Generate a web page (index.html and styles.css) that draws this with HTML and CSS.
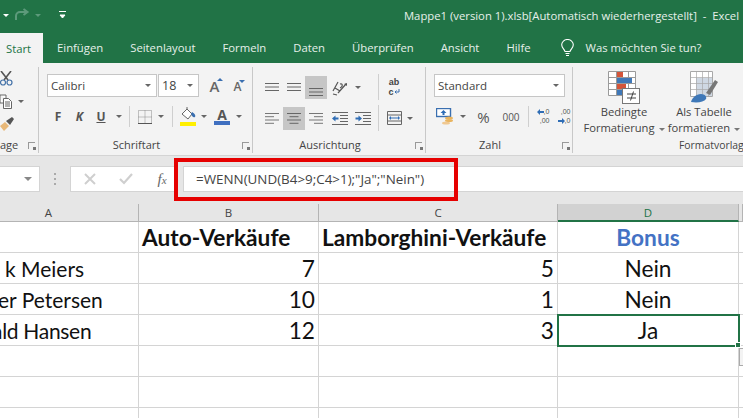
FILE: index.html
```html
<!DOCTYPE html>
<html lang="de">
<head>
<meta charset="utf-8">
<title>Mappe1 - Excel</title>
<link rel="stylesheet" href="styles.css">
</head>
<body>
<div class="app">
  <header class="titlebar">
    <div class="qat">
      <i class="caret caret-white"></i>
      <svg class="redo" width="16" height="14" viewBox="0 0 16 14"><path d="M2 12V8a4 4 0 0 1 4-4h7M9.500 1l4 3-4 3" fill="none" stroke="#5d9a7b" stroke-width="2"/></svg>
      <i class="caret caret-dim"></i>
      <svg class="custom" width="7" height="8" viewBox="0 0 7 8"><path d="M0 .5h7M1 4h5l-2.500 3z" fill="#fff" stroke="#fff" stroke-width="1"/></svg>
    </div>
    <div class="doc-title">Mappe1 (version 1).xlsb[Automatisch wiederhergestellt]&nbsp; - &nbsp;Excel</div>
  </header>

  <nav class="tabs">
    <span class="tab tab-active">Start</span>
    <span class="tab">Einfügen</span>
    <span class="tab">Seitenlayout</span>
    <span class="tab">Formeln</span>
    <span class="tab">Daten</span>
    <span class="tab">Überprüfen</span>
    <span class="tab">Ansicht</span>
    <span class="tab">Hilfe</span>
    <span class="tell">
      <svg width="13" height="18" viewBox="0 0 13 18"><path d="M4 12.500C3.500 10 .7 9 .7 5.800a5.800 5.300 0 0 1 11.600 0C12.300 9 9.500 10 9 12.500zM4.500 14.500h4M5 16.500h3" fill="none" stroke="#fff" stroke-width="1.100"/></svg>
      <span>Was möchten Sie tun?</span>
    </span>
  </nav>

  <section class="ribbon">
    <div class="group g-clip">
      <div class="clip-icons">
        <svg width="13" height="15" viewBox="0 0 13 15"><path d="M1 0l7 9M11 0L4 9" stroke="#555" stroke-width="1.600" fill="none"/><circle cx="3" cy="11.500" r="2.500" fill="none" stroke="#4472a8" stroke-width="1.200"/><circle cx="9.500" cy="11.500" r="2.500" fill="none" stroke="#4472a8" stroke-width="1.200"/></svg>
        <div class="clip-copy">
          <svg width="13" height="15" viewBox="0 0 13 15"><path d="M0 1h6v3M0 1v8h3M3.500 4.500h5l3 3v7h-8zM5 8h5M5 10h5M5 12h5" fill="#fff" stroke="#666" stroke-width="1"/></svg>
          <i class="caret"></i>
        </div>
        <svg width="14" height="15" viewBox="0 0 14 15"><path d="M0 9l5-4 4 4-5 5z" fill="#e8b878"/><path d="M6 4l6-4 2 2-4 6z" fill="#555"/></svg>
      </div>
      <div class="group-label label-clip"><span>age</span><i class="launcher"></i></div>
    </div>

    <div class="group g-font">
      <div class="grid-row font-r1">
        <div class="select select-font"><span>Calibri</span><i class="caret"></i></div>
        <div class="select select-size"><span>18</span><i class="caret"></i></div>
        <span class="glyph-a big">A<i class="mini-up"></i></span>
        <span class="glyph-a small">A<i class="mini-down"></i></span>
      </div>
      <div class="grid-row font-r2">
        <b class="fmt">F</b>
        <b class="fmt fmt-i">K</b>
        <b class="fmt fmt-u">U</b>
        <i class="caret"></i>
        <i class="sep"></i>
        <svg width="14" height="14" viewBox="0 0 14 14"><path d="M.5.500h13v13H.500zM7 .5v13M.5 7h13" fill="none" stroke="#8a8a8a" stroke-dasharray="1 1"/><path d="M0 13.500h14" stroke="#555"/></svg>
        <i class="caret"></i>
        <i class="sep"></i>
        <svg width="17" height="19" viewBox="0 0 17 19"><path d="M2 7l5-5 5 5-4 5z" fill="#fff" stroke="#666"/><path d="M7 2V0" stroke="#666"/><path d="M12 5c2 1 4 3 3 5-2 1-3-1-4-3z" fill="#3a6fb0"/><rect y="15" width="16" height="4" fill="#ffef00"/></svg>
        <i class="caret"></i>
        <span class="font-color">A<i></i></span>
        <i class="caret"></i>
      </div>
      <div class="group-label"><span>Schriftart</span><i class="launcher"></i></div>
    </div>

    <div class="group g-align">
      <div class="grid-row align-r1">
        <svg class="lines" width="14" height="9" viewBox="0 0 14 9"><path d="M0 .5h14M0 4h14M0 7.500h14" stroke="#666"/></svg>
        <svg class="lines" width="14" height="9" viewBox="0 0 14 9"><path d="M0 .5h14M0 4h14M0 7.500h14" stroke="#666"/></svg>
        <span class="btn-on btn-bottom"><svg width="14" height="9" viewBox="0 0 14 9"><path d="M0 .5h14M0 4h14M0 7.500h14" stroke="#666"/></svg></span>
        <svg class="orient" width="17" height="17" viewBox="0 0 17 17"><path d="M2 12l5-9M4 9l5 3M9 5c3-1 3 3 0 4M2 15l4 1M7 14l8-9" fill="none" stroke="#555" stroke-width="1.200"/><path d="M13 5l3-1v3z" fill="#555"/></svg>
        <i class="caret caret-start"></i>
        <i class="sep sep-tall"></i>
        <span class="wrap-ab"><span>ab</span><span>c<svg width="6" height="6" viewBox="0 0 6 6"><path d="M5 0v3H1M2.500 1.500L1 3l1.500 1.500" fill="none" stroke="#3a6fb0"/></svg></span></span>
      </div>
      <div class="grid-row align-r2">
        <svg width="14" height="11" viewBox="0 0 14 11"><path d="M0 .5h14M0 3.700h9M0 7h14M0 10.300h9" stroke="#777"/></svg>
        <span class="btn-on"><svg width="14" height="11" viewBox="0 0 14 11"><path d="M0 .5h14M2.500 3.700h9M0 7h14M2.500 10.300h9" stroke="#666"/></svg></span>
        <svg width="14" height="11" viewBox="0 0 14 11"><path d="M0 .5h14M5 3.700h9M0 7h14M5 10.300h9" stroke="#777"/></svg>
        <svg width="16" height="13" viewBox="0 0 16 13"><path d="M0 .5h16M8 3.500h8M8 6.500h8M8 9.500h8M0 12.500h16" stroke="#666"/><path d="M0 6.500l3.500-3v2h3v2h-3v2z" fill="#2f6db5"/></svg>
        <svg width="16" height="13" viewBox="0 0 16 13"><path d="M0 .5h16M8 3.500h8M8 6.500h8M8 9.500h8M0 12.500h16" stroke="#666"/><path d="M7 6.500l-3.500-3v2h-3v2h3v2z" fill="#2f6db5"/></svg>
        <i class="sep sep-tall"></i>
        <svg width="15" height="14" viewBox="0 0 15 14"><path d="M.5.500h14v13H.500zM.5 4h14M.5 10h14" fill="none" stroke="#666"/><path d="M3 7h9" stroke="#2f6db5"/><path d="M2 7l2-2v4zM13 7l-2-2v4z" fill="#2f6db5"/></svg>
        <i class="caret"></i>
      </div>
      <div class="group-label"><span>Ausrichtung</span><i class="launcher"></i></div>
    </div>

    <div class="group g-num">
      <div class="select select-num"><span>Standard</span><i class="caret"></i></div>
      <div class="grid-row num-r2">
        <svg width="18" height="17" viewBox="0 0 18 17"><rect x=".5" y=".5" width="14" height="8" fill="#fff" stroke="#3a6fb0" stroke-width="1.400"/><path d="M7.500 2l3 3H8.500v2h-2V5H4.500z" fill="#2f6db5"/><ellipse cx="13" cy="10" rx="4" ry="1.600" fill="#e9b45f"/><ellipse cx="13" cy="12.500" rx="4" ry="1.600" fill="#e9b45f"/><ellipse cx="10" cy="15" rx="4" ry="1.600" fill="#f0c890"/></svg>
        <i class="caret"></i>
        <span class="pct">%</span>
        <span class="thousand">000</span>
        <i class="sep"></i>
        <span class="dec"><span><svg width="7" height="6" viewBox="0 0 7 6"><path d="M0 3l3-3v2h4v2H3v2z" fill="#2f6db5"/></svg>,0</span><span>,00</span></span>
        <span class="dec"><span>,00</span><span><svg width="7" height="6" viewBox="0 0 7 6"><path d="M7 3L4 0v2H0v2h4v2z" fill="#2f6db5"/></svg>,0</span></span>
      </div>
      <div class="group-label"><span>Zahl</span><i class="launcher"></i></div>
    </div>

    <div class="group g-styles">
      <div class="style-btns">
        <div class="style-btn">
          <svg width="32" height="33" viewBox="0 0 32 33"><path d="M.5.500h27v24H.500zM8.500.5v24M20.500.5v24M.5 6.500h27M.5 12.500h27M.5 18.500h27" fill="#fff" stroke="#9a9a9a"/><rect x="9" y="1" width="6" height="5" fill="#d4553a"/><rect x="9" y="7" width="15" height="5" fill="#3f78b8"/><rect x="9" y="13" width="9" height="5" fill="#d4553a"/><rect x="9" y="19" width="5" height="5" fill="#3f78b8"/><rect x="14.500" y="17.500" width="17" height="15" fill="#fff" stroke="#777"/><path d="M19 23h9M19 27h9M25.500 20.500l-3 9" stroke="#444" fill="none"/></svg>
          <span>Bedingte</span>
          <span>Formatierung<i class="caret caret-sm"></i></span>
        </div>
        <div class="style-btn style-btn-2">
          <svg width="32" height="33" viewBox="0 0 32 33"><path d="M2.500.500h22v25h-22z" fill="#fff" stroke="#a8a8a8"/><path d="M8 7h16v18H8z" fill="#cfd8e3"/><path d="M2.500 6.500h22M2.500 12.500h22M2.500 18.500h22M8.500.5v25M14.500.5v25M20.500.5v25" stroke="#a8a8a8" stroke-width=".7"/><path d="M18 22l9-13 3 2-8 13z" fill="#777"/><path d="M3 31c1-4 5-8 10-8 4 0 6 3 5 5-2 3-8 4-15 3z" fill="#3f78b8"/></svg>
          <span>Als Tabelle</span>
          <span>formatieren<i class="caret caret-sm"></i></span>
        </div>
      </div>
      <div class="group-label label-styles"><span>Formatvorlag</span></div>
    </div>
  </section>

  <section class="formula-band">
    <div class="namebox"><i class="caret caret-wide"></i></div>
    <div class="dots"><i></i><i></i><i></i></div>
    <div class="fx-box">
      <svg width="12" height="12" viewBox="0 0 12 12"><path d="M1 1l10 10M11 1L1 11" stroke="#cfcfcf" stroke-width="2"/></svg>
      <svg width="14" height="12" viewBox="0 0 14 12"><path d="M1 6l4 4 8-9" fill="none" stroke="#cfcfcf" stroke-width="2.200"/></svg>
      <span class="fx">f<small>x</small></span>
    </div>
    <div class="formula-input">=WENN(UND(B4&gt;9;C4&gt;1);"Ja";"Nein")</div>
    <div class="highlight"></div>
  </section>

  <main class="sheet">
    <div class="col col-a">A</div><div class="col">B</div><div class="col">C</div><div class="col col-on">D</div><div class="col"></div>

    <div class="cell"></div><div class="cell head">Auto-Verkäufe</div><div class="cell head">Lamborghini-Verkäufe</div><div class="cell head bonus">Bonus</div><div class="cell"></div>

    <div class="cell name"><span class="n1">k Meiers</span></div><div class="cell num">7</div><div class="cell num">5</div><div class="cell mid">Nein</div><div class="cell"></div>

    <div class="cell name"><span class="n2">er Petersen</span></div><div class="cell num">10</div><div class="cell num">1</div><div class="cell mid">Nein</div><div class="cell"></div>

    <div class="cell name"><span class="n3">ald Hansen</span></div><div class="cell num">12</div><div class="cell num">3</div><div class="cell mid cell-on">Ja<i class="handle"></i><i class="paste"></i></div><div class="cell"></div>

    <div class="cell"></div><div class="cell"></div><div class="cell"></div><div class="cell"></div><div class="cell"></div>
    <div class="cell"></div><div class="cell"></div><div class="cell"></div><div class="cell"></div><div class="cell"></div>
    <div class="cell"></div><div class="cell"></div><div class="cell"></div><div class="cell"></div><div class="cell"></div>
  </main>
</div>
</body>
</html>
```
FILE: styles.css
```css
* { box-sizing: border-box; }
html, body { margin: 0; padding: 0; }
body { width: 743px; height: 418px; overflow: hidden; background: #fff; font-family: "Open Sans", "Noto Sans", sans-serif; color: #333; }
i { font-style: normal; display: block; }
.app { width: 743px; height: 418px; overflow: hidden; display: flex; flex-direction: column; }

.titlebar { height: 32px; background: #217346; color: #e6f0ea; display: flex; align-items: center; justify-content: space-between; padding: 0 4px 2px 3px; flex: none; }
.qat { display: flex; align-items: center; gap: 5px; }
.doc-title { font-size: 11.300px; white-space: nowrap; }
.caret { width: 0; height: 0; border-style: solid; border-width: 3px 3px 0; border-color: #666 transparent transparent; }
.caret-white { border-top-color: #fff; }
.caret-dim { border-top-color: #5d9a7b; margin-right: 13px; }
.caret-wide { border-width: 4px 4px 0; border-top-color: #888; }
.caret-sm { display: inline-block; margin-left: 4px; vertical-align: middle; border-top-color: #777; }
.caret-start { justify-self: start; margin-left: 3px; }

.tabs { height: 31px; background: #217346; display: flex; align-items: center; color: #e6f0ea; font-size: 11.300px; flex: none; gap: 27px; }
.tab { white-space: nowrap; }
.tab-active { background: #f3f3f3; color: #217346; align-self: stretch; width: 43px; padding-left: 6px; margin-top: 1px; margin-right: -13px; display: flex; align-items: center; }
.tell { display: flex; align-items: center; gap: 12px; margin-left: 3px; }

.ribbon { height: 93px; background: #f3f3f3; border-bottom: 1px solid #d4d4d4; display: flex; flex: none; }
.group { position: relative; display: flex; flex-direction: column; border-right: 1px solid #c8c8c8; margin: 4px 0 2px; padding-top: 7px; flex: none; }
.g-clip { width: 39px; }
.g-font { width: 214px; padding-left: 8px; }
.g-align { width: 173px; padding-left: 8px; }
.g-num { width: 147px; padding-left: 8px; }
.g-styles { width: 170px; border-right: 0; overflow: hidden; padding-top: 0; }
.group-label { position: absolute; left: 0; right: 0; bottom: 0; height: 16px; padding-right: 18px; text-align: center; font-size: 11px; line-height: 16px; color: #444; white-space: nowrap; }
.label-clip { text-align: left; padding-right: 0; }
.label-styles { text-align: left; padding: 0 0 0 106px; font-size: 10.400px; }
.launcher { position: absolute; right: 3px; top: 5px; width: 7px; height: 7px; border-left: 1px solid #999; border-top: 1px solid #999; }
.launcher::after { content: ""; position: absolute; right: -1px; bottom: -1px; width: 3px; height: 3px; background: #777; }

.clip-icons { display: flex; flex-direction: column; gap: 8px; margin-top: -3px; }
.clip-copy { display: flex; align-items: center; gap: 5px; }

.grid-row { display: grid; align-items: center; justify-items: center; }
.font-r1 { grid-template-columns: 110px 42px 9px 13px 9px 15px; height: 23px; column-gap: 0; }
.font-r1 .select-size { margin-left: 1px; }
.font-r1 .big { grid-column: 4; }
.font-r1 .small { grid-column: 6; }
.font-r2 { grid-template-columns: 22px 21px 22px 13px 8px 23px 10px 12px 20px 11px 26px 8px; height: 23px; margin-top: 8px; }

.select { height: 23px; background: #fff; border: 1px solid #c6c6c6; display: flex; align-items: center; justify-content: space-between; padding: 0 5px 0 3px; font-size: 11.500px; color: #444; }
.select-font { width: 110px; }
.select-size { width: 41px; font-size: 12.500px; }
.select-num { width: 131px; }
.glyph-a { position: relative; font-weight: 600; color: #666; }
.glyph-a.big { font-size: 15px; }
.glyph-a.small { font-size: 12px; margin-top: 2px; }
.mini-up, .mini-down { position: absolute; width: 0; height: 0; right: -4px; top: 2px; border-style: solid; border-color: transparent; border-width: 0 3px 3px; border-bottom-color: #3a6fb0; }
.mini-down { border-width: 3px 3px 0; border-top-color: #3a6fb0; border-bottom-color: transparent; }
.fmt { font-size: 12px; color: #555; font-weight: 700; }
.fmt-i { font-style: italic; }
.fmt-u { text-decoration: underline; }
.sep { width: 1px; height: 21px; background: #cfcfcf; }
.sep-tall { height: 26px; }
.font-color { font-weight: 700; font-size: 14px; line-height: 13px; color: #555; display: block; text-align: center; width: 16px; }
.font-color i { height: 4px; background: #3f6fc0; margin-top: 0; }

.align-r1 { grid-template-columns: 22px 22px 22px 25px 22px 8px 24px; height: 23px; }
.align-r2 { grid-template-columns: 22px 22px 22px 25px 22px 8px 24px 8px; height: 23px; margin-top: 8px; }
.btn-on { width: 22px; height: 23px; background: #c6c6c6; display: flex; align-items: center; justify-content: center; }
.btn-bottom { align-items: flex-end; padding-bottom: 2px; }
.wrap-ab { display: flex; flex-direction: column; align-items: center; font-family: "Liberation Sans", sans-serif; font-size: 9px; line-height: 10.400px; font-weight: 700; color: #444; }
.wrap-ab span { display: flex; align-items: center; }

.num-r2 { grid-template-columns: 24px 12px 29px 26px 8px 22px 20px; height: 23px; margin-top: 8px; margin-left: -1px; }
.pct { font-size: 15px; color: #555; }
.thousand { font-size: 10px; color: #555; }
.dec { display: flex; flex-direction: column; align-items: flex-end; font-family: "Liberation Sans", sans-serif; font-size: 7px; line-height: 8.100px; color: #555; white-space: nowrap; }
.dec span { display: flex; align-items: center; }

.style-btns { display: flex; padding: 4px 0 0 7px; }
.style-btn { display: flex; flex-direction: column; align-items: center; width: 88px; font-size: 11.200px; line-height: 16px; color: #444; white-space: nowrap; }
.style-btn-2 { width: 72px; }

.formula-band { height: 48px; background: #e6e6e6; position: relative; display: flex; align-items: flex-start; padding-top: 10px; flex: none; }
.namebox { width: 40px; height: 26px; background: #fff; border: 1px solid #d4d4d4; border-left: 0; display: flex; align-items: center; justify-content: flex-end; padding-right: 7px; }
.dots { width: 30px; height: 26px; display: flex; flex-direction: column; align-items: center; justify-content: center; gap: 3px; }
.dots i { width: 2px; height: 2px; background: #aaa; }
.fx-box { width: 107px; height: 26px; background: #fff; border: 1px solid #d4d4d4; display: grid; grid-template-columns: 36px 36px 36px; align-items: center; justify-items: center; padding-left: 1px; }
.fx { font-family: "Liberation Serif", serif; font-style: italic; font-size: 15px; color: #666; }
.fx small { font-size: 11px; }
.formula-input { flex: 1; height: 26px; margin-left: 6px; background: #fff; border: 1px solid #d4d4d4; border-right: 0; padding-left: 12px; font-size: 13.400px; line-height: 25px; color: #444; white-space: nowrap; }
.highlight { position: absolute; left: 174px; top: 2px; width: 284px; height: 43px; border: 4px solid #e60000; }

.sheet { flex: 1; display: grid; grid-template-columns: 139px 180px 239px 181px 4px; grid-template-rows: 18px repeat(7, 31px); }
.col { background: #e6e6e6; border-right: 1px solid #b4b4b4; border-bottom: 1px solid #b4b4b4; font-size: 11.500px; color: #444; display: flex; align-items: center; justify-content: center; }
.col-a { padding-right: 41px; }
.col-on { background: #d2d2d2; border-bottom: 2px solid #217346; color: #217346; }
.cell { border-right: 1px solid #d4d4d4; border-bottom: 1px solid #d4d4d4; font-family: "Lato", "Liberation Sans", sans-serif; font-size: 22.700px; color: #111; display: flex; align-items: center; padding: 0 3px; white-space: nowrap; position: relative; min-width: 0; }
.head { font-weight: 700; }
.bonus { color: #4472c4; justify-content: center; }
.name { padding-left: 0; font-size: 21px; }
.n1 { margin-left: 5px; }
.n2 { margin-left: -2px; }
.n3 { margin-left: -8px; letter-spacing: -.3px; }
.num { justify-content: flex-end; }
.mid { justify-content: center; }
.cell-on { outline: 2px solid #217346; outline-offset: -1px; z-index: 2; }
.handle { position: absolute; right: -3px; bottom: -3px; background: #217346; border: 1px solid #fff; box-sizing: content-box; width: 4px; height: 4px; }
.paste { position: absolute; left: 100%; margin-left: 1px; top: 33px; width: 8px; height: 18px; background: #f3f3f3; border: 1px solid #aaa; }
```
